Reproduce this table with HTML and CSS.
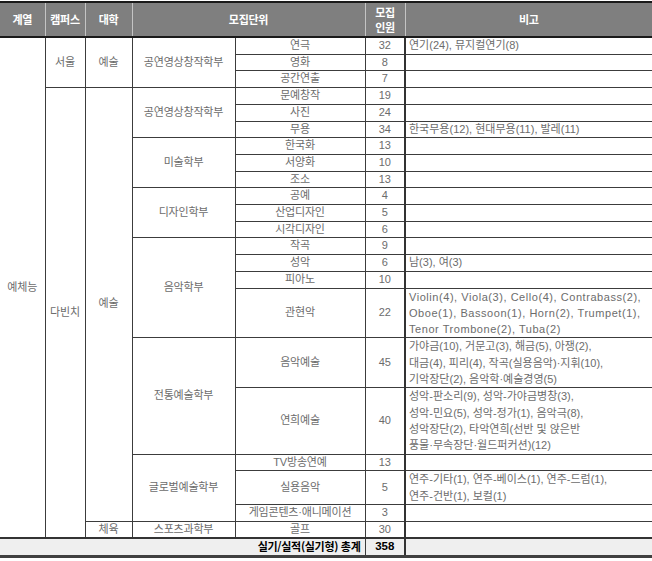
FILE: index.html
```html
<!DOCTYPE html>
<html lang="ko">
<head>
<meta charset="utf-8">
<title>모집단위</title>
<link rel="stylesheet" href="styles.css">
</head>
<body>
<table class="tbl">
  <colgroup>
    <col class="c1"><col class="c2"><col class="c3"><col class="c4"><col class="c5"><col class="c6"><col class="c7">
  </colgroup>
  <thead>
    <tr>
      <th>계열</th>
      <th>캠퍼스</th>
      <th>대학</th>
      <th colspan="2">모집단위</th>
      <th class="two">모집<br>인원</th>
      <th>비고</th>
    </tr>
  </thead>
  <tbody>
    <tr>
      <td rowspan="22" class="first">예체능</td>
      <td rowspan="3">서울</td>
      <td rowspan="3">예술</td>
      <td rowspan="3">공연영상창작학부</td>
      <td>연극</td><td class="num">32</td><td class="note">연기(24), 뮤지컬연기(8)</td>
    </tr>
    <tr><td>영화</td><td class="num">8</td><td class="note"></td></tr>
    <tr><td>공간연출</td><td class="num">7</td><td class="note"></td></tr>
    <tr>
      <td rowspan="19">다빈치</td>
      <td rowspan="18">예술</td>
      <td rowspan="3">공연영상창작학부</td>
      <td>문예창작</td><td class="num">19</td><td class="note"></td>
    </tr>
    <tr><td>사진</td><td class="num">24</td><td class="note"></td></tr>
    <tr><td>무용</td><td class="num">34</td><td class="note">한국무용(12), 현대무용(11), 발레(11)</td></tr>
    <tr>
      <td rowspan="3">미술학부</td>
      <td>한국화</td><td class="num">13</td><td class="note"></td>
    </tr>
    <tr><td>서양화</td><td class="num">10</td><td class="note"></td></tr>
    <tr><td>조소</td><td class="num">13</td><td class="note"></td></tr>
    <tr>
      <td rowspan="3">디자인학부</td>
      <td>공예</td><td class="num">4</td><td class="note"></td>
    </tr>
    <tr><td>산업디자인</td><td class="num">5</td><td class="note"></td></tr>
    <tr><td>시각디자인</td><td class="num">6</td><td class="note"></td></tr>
    <tr>
      <td rowspan="4">음악학부</td>
      <td>작곡</td><td class="num">9</td><td class="note"></td>
    </tr>
    <tr><td>성악</td><td class="num">6</td><td class="note">남(3), 여(3)</td></tr>
    <tr><td>피아노</td><td class="num">10</td><td class="note"></td></tr>
    <tr><td>관현악</td><td class="num">22</td><td class="note multi latin">Violin(4), Viola(3), Cello(4), Contrabass(2),<br>Oboe(1), Bassoon(1), Horn(2), Trumpet(1),<br>Tenor Trombone(2), Tuba(2)</td></tr>
    <tr>
      <td rowspan="2">전통예술학부</td>
      <td>음악예술</td><td class="num">45</td><td class="note multi">가야금(10), 거문고(3), 해금(5), 아쟁(2),<br>대금(4), 피리(4), 작곡(실용음악)·지휘(10),<br>기악장단(2), 음악학·예술경영(5)</td>
    </tr>
    <tr><td>연희예술</td><td class="num">40</td><td class="note multi">성악-판소리(9), 성악-가야금병창(3),<br>성악-민요(5), 성악-정가(1), 음악극(8),<br>성악장단(2), 타악연희(선반 및 앉은반<br>풍물·무속장단·월드퍼커션)(12)</td></tr>
    <tr>
      <td rowspan="3">글로벌예술학부</td>
      <td>TV방송연예</td><td class="num">13</td><td class="note"></td>
    </tr>
    <tr><td>실용음악</td><td class="num">5</td><td class="note multi">연주-기타(1), 연주-베이스(1), 연주-드럼(1),<br>연주-건반(1), 보컬(1)</td></tr>
    <tr><td>게임콘텐츠·애니메이션</td><td class="num">3</td><td class="note"></td></tr>
    <tr>
      <td>체육</td>
      <td>스포츠과학부</td>
      <td>골프</td><td class="num">30</td><td class="note"></td>
    </tr>
    <tr class="total">
      <td colspan="5" class="total-label">실기/실적(실기형) 총계</td>
      <td class="num total-num">358</td>
      <td class="note"></td>
    </tr>
  </tbody>
</table>
</body>
</html>
```

FILE: styles.css
```css
html, body {
  margin: 0;
  padding: 0;
  background: #ffffff;
}

body {
  padding-top: 1px;
}

.tbl {
  width: 652px;
  table-layout: fixed;
  border-collapse: collapse;
  font-family: "Liberation Sans", "Noto Sans CJK KR", sans-serif;
  font-size: 11px;
  color: #6c6c6c;
}

.c1 { width: 45px; }
.c2 { width: 40px; }
.c3 { width: 47px; }
.c4 { width: 103px; }
.c5 { width: 130px; }
.c6 { width: 40px; }
.c7 { width: 247px; }

.tbl th {
  background: #7f7f7f;
  color: #ffffff;
  font-family: "Noto Sans CJK KR", sans-serif;
  font-weight: 700;
  font-size: 11px;
  line-height: 15px;
  height: 33px;
  padding: 0;
  text-align: center;
  vertical-align: middle;
  border-top: 2px solid #1a1a1a;
  border-bottom: 2px solid #1a1a1a;
  border-left: 1px solid #c4c4c4;
  border-right: 1px solid #c4c4c4;
  letter-spacing: -0.3px;
}

.tbl th:first-child {
  border-left: none;
}

.tbl th:last-child {
  border-right: none;
}

.tbl td {
  padding: 0;
  line-height: 15.7px;
  text-align: center;
  vertical-align: middle;
  white-space: nowrap;
  border: 1px solid #3c3c3c;
  overflow: hidden;
  letter-spacing: -0.2px;
}

.tbl td.first {
  border-left: none;
}

.tbl td.num {
  border-left: 1px solid #666666;
  border-right: 2px solid #333333;
  letter-spacing: 0;
}

.tbl td.note {
  text-align: left;
  padding-left: 3px;
  border-right: none;
  letter-spacing: 0;
}

.tbl td.multi {
  line-height: 16.3px;
}

.tbl td.latin {
  letter-spacing: 0.55px;
}

.total td {
  background: #efefef;
  color: #000000;
  font-weight: 700;
  border-top: 2px solid #333333;
  border-bottom: 3px solid #404040;
  line-height: 15.7px;
}

.total td.total-label {
  text-align: right;
  padding-right: 4px;
  border-left: none;
  font-family: "Noto Sans CJK KR", sans-serif;
  letter-spacing: -0.3px;
}

.total td.total-num {
  font-size: 11.5px;
}
```
